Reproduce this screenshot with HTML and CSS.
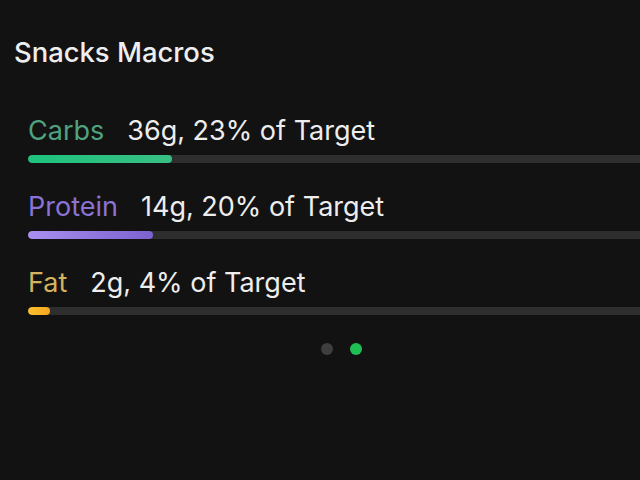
FILE: index.html
```html
<!DOCTYPE html>
<html>
<head>
<meta charset="utf-8">
<link rel="stylesheet" href="styles.css">
</head>
<body>
<div class="card">
  <h1 class="title">Snacks Macros</h1>
  <div class="macros">
    <div class="macro">
      <div class="line"><span class="label carbs">Carbs</span><span class="value">36g, 23% of Target</span></div>
      <div class="track"><div class="fill fill-carbs" style="width:144px"></div></div>
    </div>
    <div class="macro">
      <div class="line"><span class="label protein">Protein</span><span class="value">14g, 20% of Target</span></div>
      <div class="track"><div class="fill fill-protein" style="width:125px"></div></div>
    </div>
    <div class="macro">
      <div class="line"><span class="label fat">Fat</span><span class="value">2g, 4% of Target</span></div>
      <div class="track"><div class="fill fill-fat" style="width:22px"></div></div>
    </div>
    <div class="dots"><span class="dot"></span><span class="dot active"></span></div>
  </div>
</div>
</body>
</html>
```
FILE: styles.css
```css
html, body {
  margin: 0;
  padding: 0;
  background: #121212;
  overflow: hidden;
  width: 640px;
  height: 480px;
}
body {
  font-family: Inter, "Noto Sans", sans-serif;
  color: #ececec;
}
.card {
  padding: 36px 0 0 14px;
}
.title {
  margin: 0;
  font-size: 27.4px;
  line-height: 32px;
  font-weight: 500;
  color: #eeeeee;
}
.macros {
  display: flex;
  flex-direction: column;
  gap: 28px;
  padding-left: 14px;
  margin-top: 47px;
}
.macro {
  display: flex;
  flex-direction: column;
  gap: 8px;
}
.line {
  display: flex;
  gap: 23px;
  font-size: 27px;
  line-height: 32px;
  white-space: nowrap;
}
.carbs { color: #4fa27f; }
.protein { color: #8b72d4; }
.fat { color: #d4b45e; }
.value { color: #ededed; }
.track {
  width: 626px;
  height: 8px;
  border-radius: 4px;
  background: #2e2e2e;
  overflow: hidden;
}
.fill {
  height: 100%;
  border-radius: 4px;
}
.fill-carbs { background: linear-gradient(90deg, #1ec37d, #39be85); }
.fill-protein { background: linear-gradient(90deg, #a88ff0, #7b62cf); }
.fill-fat { background: linear-gradient(90deg, #fbbf2a, #f5a822); }
.dots {
  width: 626px;
  display: flex;
  justify-content: center;
  gap: 17px;
}
.dot {
  width: 12px;
  height: 12px;
  border-radius: 50%;
  background: #3e3e3e;
}
.dot.active { background: #1fbf55; }
```
